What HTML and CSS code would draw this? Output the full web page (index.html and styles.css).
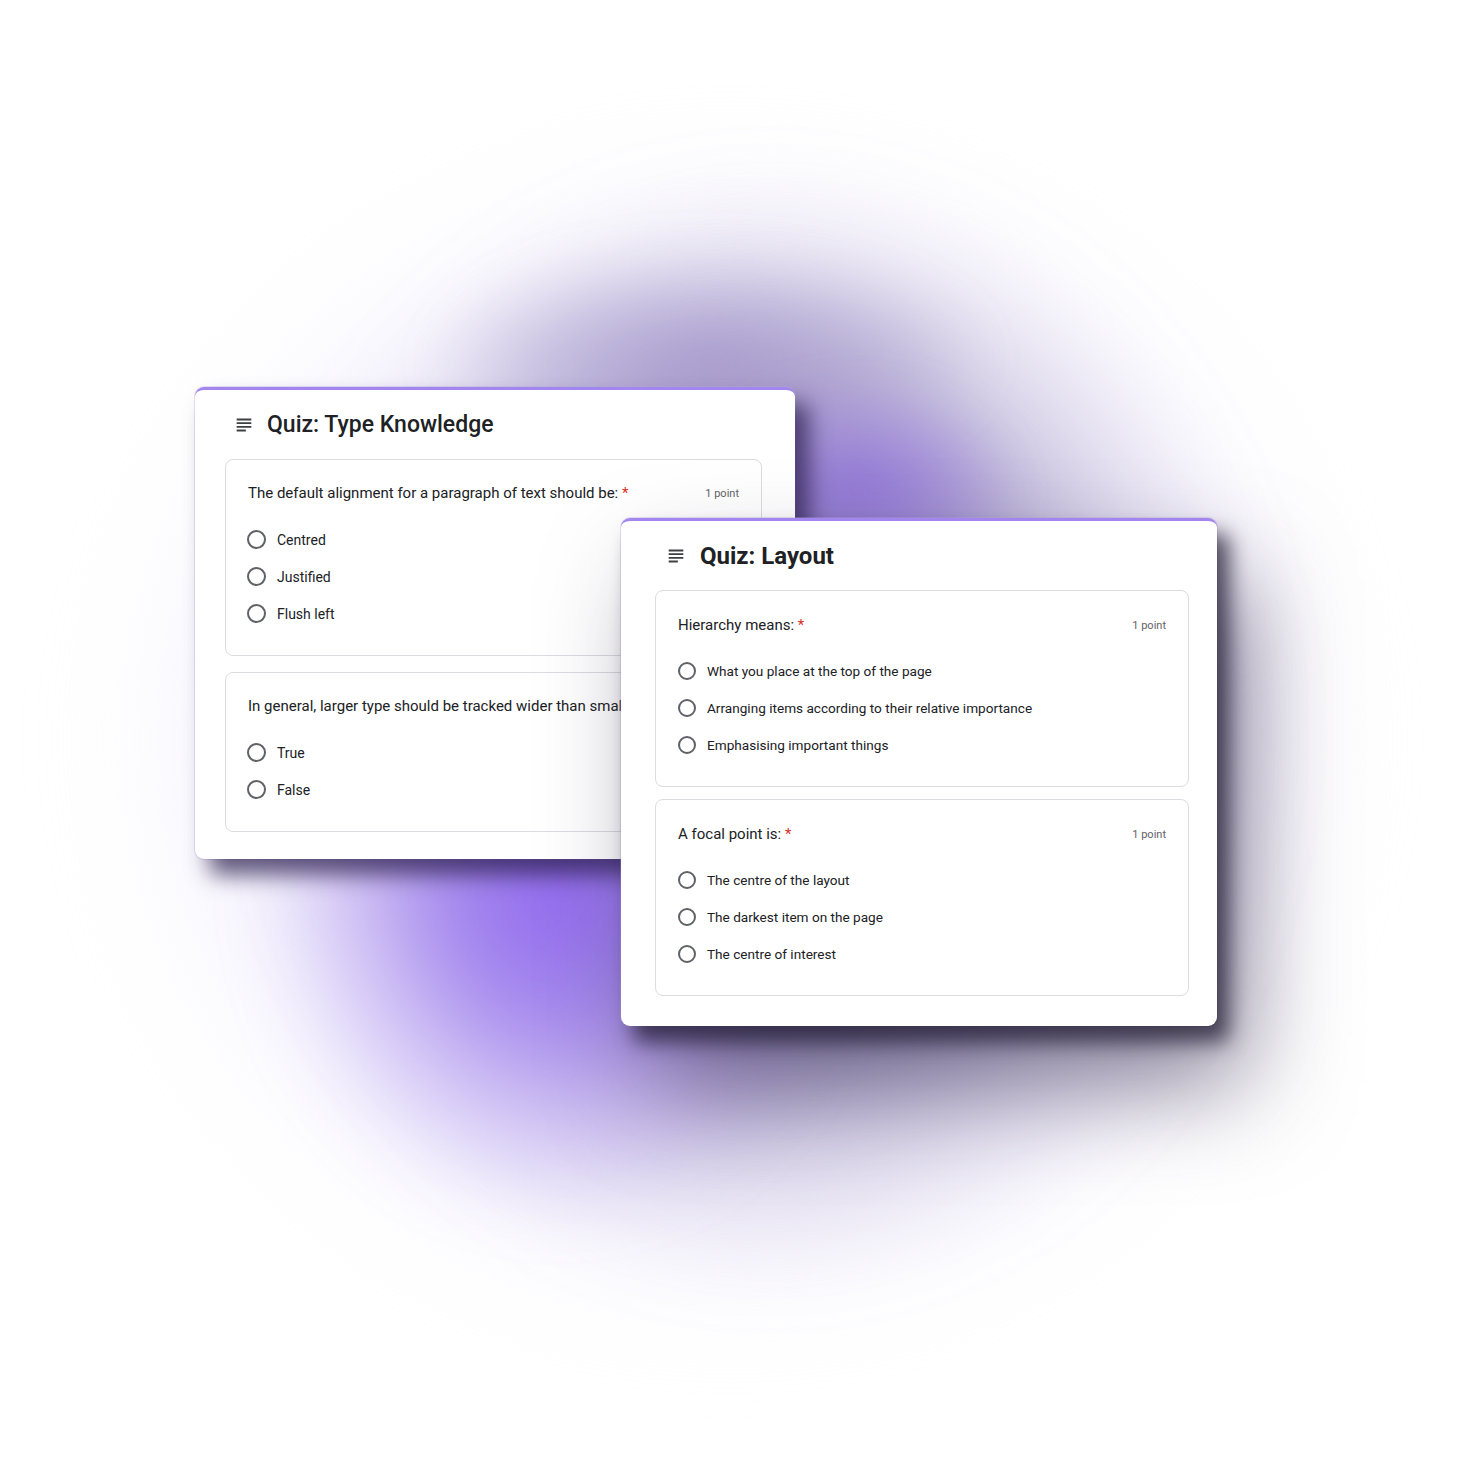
FILE: index.html
```html
<!DOCTYPE html>
<html lang="en">
<head>
<meta charset="utf-8">
<title>Quiz cards</title>
<link rel="stylesheet" href="styles.css">
</head>
<body>
<div class="stage">
  <div class="glow glow-c"></div>
  <div class="glow glow-b"></div>
  <div class="glow glow-e"></div>
  <div class="glow glow-a"></div>
  <div class="glow glow-d"></div>

  <section class="card card-type">
    <header class="card-head">
      <svg class="head-icon" viewBox="0 0 24 24" aria-hidden="true"><path d="M14 17H4v2h10v-2zm6-8H4v2h16V9zM4 15h16v-2H4v2zM4 5v2h16V5H4z"/></svg>
      <h1 class="card-title">Quiz: Type Knowledge</h1>
    </header>
    <div class="questions">
      <div class="question">
        <div class="q-row">
          <p class="q-text">The default alignment for a paragraph of text should be: <span class="req">*</span></p>
          <span class="points">1 point</span>
        </div>
        <ul class="options">
          <li class="option"><span class="radio"></span>Centred</li>
          <li class="option"><span class="radio"></span>Justified</li>
          <li class="option"><span class="radio"></span>Flush left</li>
        </ul>
      </div>
      <div class="question">
        <div class="q-row">
          <p class="q-text">In general, larger type should be tracked wider than smaller type. <span class="req">*</span></p>
        </div>
        <ul class="options">
          <li class="option"><span class="radio"></span>True</li>
          <li class="option"><span class="radio"></span>False</li>
        </ul>
      </div>
    </div>
  </section>

  <section class="card card-layout">
    <header class="card-head">
      <svg class="head-icon" viewBox="0 0 24 24" aria-hidden="true"><path d="M14 17H4v2h10v-2zm6-8H4v2h16V9zM4 15h16v-2H4v2zM4 5v2h16V5H4z"/></svg>
      <h1 class="card-title">Quiz: Layout</h1>
    </header>
    <div class="questions">
      <div class="question">
        <div class="q-row">
          <p class="q-text">Hierarchy means: <span class="req">*</span></p>
          <span class="points">1 point</span>
        </div>
        <ul class="options">
          <li class="option"><span class="radio"></span>What you place at the top of the page</li>
          <li class="option"><span class="radio"></span>Arranging items according to their relative importance</li>
          <li class="option"><span class="radio"></span>Emphasising important things</li>
        </ul>
      </div>
      <div class="question">
        <div class="q-row">
          <p class="q-text">A focal point is: <span class="req">*</span></p>
          <span class="points">1 point</span>
        </div>
        <ul class="options">
          <li class="option"><span class="radio"></span>The centre of the layout</li>
          <li class="option"><span class="radio"></span>The darkest item on the page</li>
          <li class="option"><span class="radio"></span>The centre of interest</li>
        </ul>
      </div>
    </div>
  </section>
</div>
</body>
</html>
```
FILE: styles.css
```css
* { box-sizing: border-box; }

html, body {
  margin: 0;
  padding: 0;
  background: #ffffff;
}

body {
  font-family: Roboto, "Liberation Sans", Arial, sans-serif;
  color: #202124;
}

.stage {
  position: relative;
  width: 1464px;
  height: 1464px;
  overflow: hidden;
  background: #ffffff;
}

/* soft background glow */
.glow {
  position: absolute;
  border-radius: 50%;
  pointer-events: none;
}

/* wide lavender haze */
.glow-c {
  left: 60px;
  top: 100px;
  width: 1340px;
  height: 1280px;
  background: radial-gradient(closest-side, rgba(190,172,244,0.7) 0%, rgba(200,186,246,0.55) 40%, rgba(220,212,248,0.34) 68%, rgba(240,236,252,0.14) 88%, rgba(255,255,255,0) 100%);
  filter: blur(30px);
}

/* grey-mauve core */
.glow-b {
  left: 270px;
  top: 180px;
  width: 1000px;
  height: 1100px;
  background: radial-gradient(closest-side, rgba(100,86,142,0.9) 0%, rgba(108,94,148,0.8) 30%, rgba(128,116,165,0.55) 55%, rgba(160,150,190,0.22) 80%, rgba(180,170,205,0) 100%);
  filter: blur(40px);
}

/* mauve above the first card */
.glow-e {
  left: 430px;
  top: 250px;
  width: 560px;
  height: 220px;
  background: radial-gradient(closest-side, rgba(140,122,190,0.55) 0%, rgba(150,135,195,0.3) 60%, rgba(160,150,200,0) 100%);
  filter: blur(25px);
}

/* bright violet lower-left */
.glow-a {
  left: 260px;
  top: 560px;
  width: 600px;
  height: 660px;
  background: radial-gradient(closest-side, rgba(145,105,240,1) 0%, rgba(158,124,242,0.8) 35%, rgba(185,160,246,0.45) 68%, rgba(205,190,250,0) 100%);
  filter: blur(30px);
}

/* violet between the cards */
.glow-d {
  left: 700px;
  top: 380px;
  width: 320px;
  height: 220px;
  background: radial-gradient(closest-side, rgba(140,105,225,0.7) 0%, rgba(150,120,230,0.35) 60%, rgba(160,135,235,0) 100%);
  filter: blur(20px);
}

/* cards */
.card {
  position: absolute;
  background: #ffffff;
  border-radius: 9px;
  border-top: 3px solid #a285ef;
  z-index: 2;
}

.card-type {
  left: 195px;
  top: 387px;
  width: 600px;
  height: 472px;
  padding: 0 33px 0 30px;
  box-shadow: 14px 16px 22px rgba(40, 28, 75, 0.72), 0 0 0 1px rgba(190, 175, 235, 0.35);
}

.card-layout {
  left: 621px;
  top: 518px;
  width: 596px;
  height: 508px;
  padding: 0 28px 0 34px;
  z-index: 3;
  box-shadow: 12px 16px 20px rgba(35, 30, 52, 0.75), 30px 60px 100px rgba(55, 46, 80, 0.55), 0 0 0 1px rgba(190, 175, 235, 0.35);
}

.card-head {
  display: flex;
  align-items: center;
  height: 69px;
  padding-left: 8px;
  gap: 12px;
}

.card-layout .card-head {
  padding-left: 10px;
  gap: 13px;
}

.head-icon {
  width: 22px;
  height: 22px;
  fill: #3c4043;
  flex: none;
}

.card-title {
  margin: 0;
  font-size: 23px;
  font-weight: 500;
  color: #202124;
}

.card-layout .card-title {
  font-size: 24px;
  font-weight: 700;
}

.questions {
  display: flex;
  flex-direction: column;
  gap: 16px;
}

.card-layout .questions {
  gap: 12px;
}

.question {
  border: 1px solid #dadce0;
  border-radius: 8px;
  padding: 23px 22px 23px 22px;
}

.q-row {
  display: flex;
  align-items: center;
  justify-content: space-between;
  height: 20px;
  margin-bottom: 18px;
}

.q-text {
  margin: 0;
  font-size: 15px;
  white-space: nowrap;
  color: #202124;
}

.card-layout .q-row {
  margin-top: 1px;
  margin-bottom: 17px;
}

.req {
  color: #d93025;
}

.points {
  font-size: 11px;
  color: #5f6368;
  white-space: nowrap;
  flex: none;
}

.options {
  list-style: none;
  margin: 0;
  padding: 0;
}

.option {
  display: flex;
  align-items: center;
  height: 37px;
  font-size: 14px;
  color: #202124;
}

.card-type .option {
  margin-left: -1px;
}

.card-layout .option {
  font-size: 13.6px;
}

.radio {
  width: 19px;
  height: 19px;
  border: 2px solid #5f6368;
  border-radius: 50%;
  margin-right: 11px;
  flex: none;
}

.card-layout .radio {
  width: 18px;
  height: 18px;
}
```
